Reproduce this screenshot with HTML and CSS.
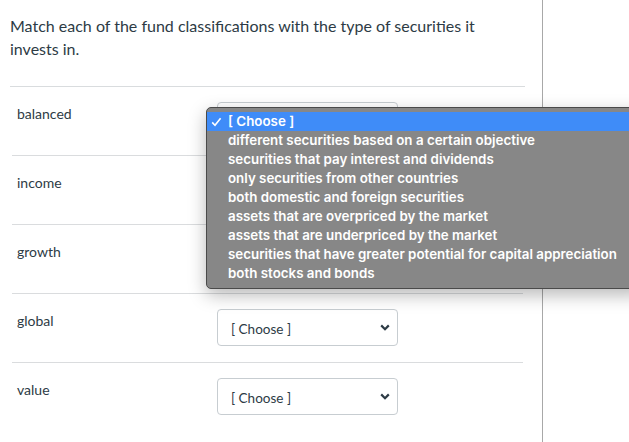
FILE: index.html
```html
<!DOCTYPE html>
<html>
<head>
<meta charset="utf-8">
<link rel="stylesheet" href="styles.css">
</head>
<body>
<div class="main">
  <p class="question">Match each of the fund classifications with the type of securities it invests in.</p>
  <div class="rule"></div>
  <div class="rows">
    <div class="row"><div class="label">balanced</div><div class="select"><span>[ Choose ]</span><svg class="chev" width="10" height="7" viewBox="0 0 10 7"><path d="M1.2 1.4 L5 5.2 L8.8 1.4" fill="none" stroke="#2d3b45" stroke-width="2.2"/></svg></div></div>
    <div class="row"><div class="label">income</div><div class="select"><span>[ Choose ]</span><svg class="chev" width="10" height="7" viewBox="0 0 10 7"><path d="M1.2 1.4 L5 5.2 L8.8 1.4" fill="none" stroke="#2d3b45" stroke-width="2.2"/></svg></div></div>
    <div class="row"><div class="label">growth</div><div class="select"><span>[ Choose ]</span><svg class="chev" width="10" height="7" viewBox="0 0 10 7"><path d="M1.2 1.4 L5 5.2 L8.8 1.4" fill="none" stroke="#2d3b45" stroke-width="2.2"/></svg></div></div>
    <div class="row"><div class="label">global</div><div class="select"><span>[ Choose ]</span><svg class="chev" width="10" height="7" viewBox="0 0 10 7"><path d="M1.2 1.4 L5 5.2 L8.8 1.4" fill="none" stroke="#2d3b45" stroke-width="2.2"/></svg></div></div>
    <div class="row last"><div class="label">value</div><div class="select"><span>[ Choose ]</span><svg class="chev" width="10" height="7" viewBox="0 0 10 7"><path d="M1.2 1.4 L5 5.2 L8.8 1.4" fill="none" stroke="#2d3b45" stroke-width="2.2"/></svg></div></div>
  </div>
</div>
<ul class="popup">
  <li class="opt selected"><svg class="check" width="11" height="10" viewBox="0 0 11 10"><path d="M1.2 5.4 L4 8.3 L9.6 1.2" fill="none" stroke="#fff" stroke-width="1.6"/></svg>[ Choose ]</li>
  <li class="opt">different securities based on a certain objective</li>
  <li class="opt">securities that pay interest and dividends</li>
  <li class="opt">only securities from other countries</li>
  <li class="opt">both domestic and foreign securities</li>
  <li class="opt">assets that are overpriced by the market</li>
  <li class="opt">assets that are underpriced by the market</li>
  <li class="opt">securities that have greater potential for capital appreciation</li>
  <li class="opt">both stocks and bonds</li>
</ul>
</body>
</html>
```
FILE: styles.css
```css
html, body {
  margin: 0;
  padding: 0;
  background: #fff;
  overflow: hidden;
}
body {
  width: 629px;
  height: 442px;
  position: relative;
  font-family: Lato, "Open Sans", sans-serif;
  color: #2d3b45;
}
.main {
  width: 543px;
  height: 442px;
  border-right: 1px solid #a8a8a8;
  box-sizing: border-box;
}
.question {
  margin: 0;
  padding: 15px 10px 0 10px;
  width: 500px;
  font-size: 16px;
  line-height: 22.5px;
}
.rule {
  margin: 26px 0 0 10px;
  width: 515px;
  height: 1px;
  background: #d9dcde;
}
.rows {
  margin-left: 12px;
  width: 511px;
}
.row {
  display: grid;
  grid-template-columns: 205px 181px;
  height: 68px;
  border-bottom: 1px solid #dadcde;
}
.row.last {
  border-bottom: none;
}
.label {
  padding: 18px 0 0 5px;
  font-size: 14px;
  line-height: 18px;
}
.select {
  margin-top: 15px;
  height: 37px;
  box-sizing: border-box;
  border: 1px solid #c7cdd1;
  border-radius: 4px;
  display: flex;
  align-items: center;
  justify-content: space-between;
  padding: 2px 7px 0 13px;
  font-size: 13.5px;
  background: #fff;
}
.chev {
  display: block;
  margin-top: -2px;
}
.popup {
  position: absolute;
  left: 206px;
  top: 107px;
  width: 440px;
  margin: 0;
  padding: 4px 0 5px 0;
  list-style: none;
  background: #878787;
  border: 1px solid #4a4a4a;
  border-radius: 5px;
  box-shadow: 0 6px 18px rgba(0, 0, 0, 0.28);
  box-sizing: border-box;
  font-family: Inter, "Liberation Sans", sans-serif;
  font-weight: 600;
  font-size: 13.35px;
  color: #fff;
}
.opt {
  height: 19px;
  line-height: 19px;
  padding-left: 21px;
  position: relative;
  white-space: nowrap;
}
.opt.selected {
  background: #3f8cf8;
}
.check {
  position: absolute;
  left: 4px;
  top: 5px;
}
```
